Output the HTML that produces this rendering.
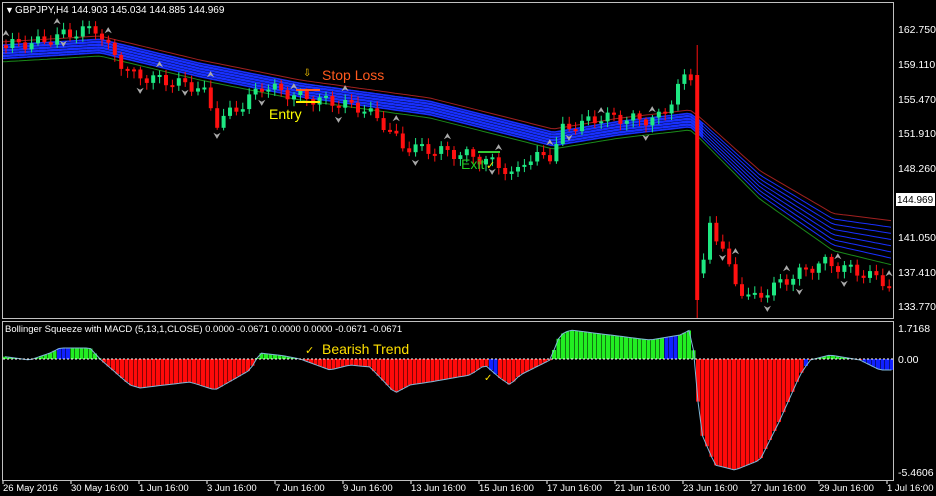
<!DOCTYPE html><html><head><meta charset="utf-8"><style>
html,body{margin:0;padding:0;background:#000;width:936px;height:496px;overflow:hidden}
svg{display:block;font-family:"Liberation Sans",sans-serif}
</style></head><body>
<svg id="s" width="936" height="496" xmlns="http://www.w3.org/2000/svg">
<rect width="936" height="496" fill="#000"/>
<g id="g"></g>
<rect x="2.5" y="2.5" width="891" height="316" fill="none" stroke="#c0c0c0"/>
<rect x="2.5" y="321.5" width="891" height="159" fill="none" stroke="#c0c0c0"/>
<g fill="#fff" font-size="10.5">
<text x="5" y="13" font-size="9">▼</text>
<text x="15" y="13" font-size="10">GBPJPY,H4  144.903 145.034 144.885 144.969</text>
<text x="5" y="332" font-size="9.5">Bollinger Squeeze with MACD (5,13,1,CLOSE) 0.0000 -0.0671 0.0000 0.0000 -0.0671 -0.0671</text>
<text x="898" y="33">162.750</text><text x="898" y="68">159.110</text><text x="898" y="103">155.470</text>
<text x="898" y="137">151.910</text><text x="898" y="172">148.260</text><text x="898" y="241">141.050</text>
<text x="898" y="276">137.410</text><text x="898" y="310">133.770</text>
<text x="898" y="332">1.7168</text><text x="898" y="363">0.00</text><text x="898" y="476">-5.4606</text>
</g>
<rect x="896" y="193" width="39" height="13" fill="#fff"/><text x="897" y="203" font-size="10" fill="#000" font-family="Liberation Sans">144.969</text>
<g fill="#fff" font-size="9.5" id="d"></g>
<g font-size="14">
<text x="322" y="80" fill="#ff5a1e">Stop Loss</text>
<text x="269" y="119" fill="#ffff00">Entry</text>
<text x="461" y="169" fill="#22cc22">Exit</text><text x="486" y="169" fill="#ffe000" font-size="11">✓</text>
<text x="322" y="354" fill="#ffe000">Bearish Trend</text><text x="305" y="354" fill="#ffe000" font-size="11">✓</text>
<text x="484" y="381" fill="#ffe000" font-size="10">✓</text>
<text x="303" y="76" fill="#ffcc00" font-size="10">⇩</text>
</g>
<rect x="296" y="89" width="24" height="2" fill="#ff5a1e"/>
<rect x="296" y="101" width="24" height="2" fill="#ffee00"/>
<rect x="478" y="151" width="22" height="2" fill="#33cc33"/>
</svg>
<script>
var g=document.getElementById('g'),h='';
function interp(p,x){for(var i=1;i<p.length;i++){if(x<=p[i][0]){var a=p[i-1],b=p[i];return a[1]+(b[1]-a[1])*(x-a[0])/(b[0]-a[0]);}}return p[p.length-1][1];}
var mid=[[0,52],[100,46],[200,70],[300,90],[430,108],[553,139],[620,128],[690,120],[700,128],[760,185],[833,232],[893,243]];
var sc=function(x){return x<690?1:1+(x-690)*0.006;};
var pts=function(off,xe){var s='';for(var x=3;x<=(xe||893);x+=4){var y=interp(mid,x)+off*sc(x);s+=x+','+y.toFixed(1)+' ';}return s;};
h+='<polyline points="'+pts(-10)+'" fill="none" stroke="#a02020"/>';
for(var k=-6.3;k<=6.4;k+=1.4)h+='<polyline points="'+pts(k,705)+'" fill="none" stroke="#1830ff"/>';
for(var k=-7;k<=7.1;k+=2.8)h+='<polyline points="'+pts(k)+'" fill="none" stroke="#1830ff"/>';
h+='<polyline points="'+pts(10)+'" fill="none" stroke="#1a8a1a"/>';
var cp=[[5,45],[40,42],[60,35],[95,28],[105,47],[130,75],[160,80],[200,88],[215,122],[240,105],[262,85],[280,92],[300,97],[330,102],[360,108],[380,122],[400,146],[430,150],[470,156],[500,166],[512,178],[522,160],[550,155],[560,130],[600,117],[640,120],[660,117],[680,80],[690,75],[696,300],[708,225],[720,245],[730,280],[750,300],[780,282],[820,262],[850,270],[880,280],[893,290]];
var prev=interp(cp,2);
for(var x=4;x<890;x+=6.4){var c=interp(cp,x)+Math.sin(x*1.7)*6;var o=prev;var up=c<o;var col=up?'#1ee882':'#ff1010';var t=Math.min(o,c),b=Math.max(o,c);if(b-t<2)b=t+2;
var wt=t-2-Math.abs(Math.sin(x))*5,wb=b+2+Math.abs(Math.cos(x))*5;
if(Math.abs(x-696)<3.3){t=75;b=300;wt=45;wb=318;col='#ff1010';}
h+='<line x1="'+(x+2)+'" x2="'+(x+2)+'" y1="'+wt.toFixed(1)+'" y2="'+wb.toFixed(1)+'" stroke="'+col+'"/>';
h+='<rect x="'+x.toFixed(1)+'" y="'+t.toFixed(1)+'" width="4" height="'+(b-t).toFixed(1)+'" fill="'+col+'"/>';
if(Math.sin(x*0.37)>0.93)h+='<text x="'+(x-2)+'" y="'+(wt-3).toFixed(0)+'" fill="#aaa" font-size="9">⮝</text>';
if(Math.cos(x*0.41)>0.95)h+='<text x="'+(x-2)+'" y="'+(wb+9).toFixed(0)+'" fill="#aaa" font-size="9">⮟</text>';
prev=c;}
var hp=[[0,356],[30,360],[50,353],[60,348],[90,348],[100,359],[130,385],[140,388],[190,382],[215,390],[250,370],[260,353],[285,356],[300,359],[330,370],[350,365],[370,367],[395,393],[410,385],[430,382],[470,375],[485,365],[500,378],[510,385],[520,375],[550,360],[560,335],[570,330],[650,340],[680,335],[690,330],[695,359],[700,430],[715,465],[735,470],[760,460],[780,420],[800,375],[810,360],[830,355],[860,360],[880,370],[893,370]];
var line='';
for(var x=3;x<892;x+=4.5){var y=interp(hp,x+2);var col=y<359?'#22ee22':'#ff0a0a';if((x>55&&x<70)||(x>485&&x<498)||(x>660&&x<675)||(x>800&&x<808)||(x>862&&x<892))col='#1020ff';
h+='<rect x="'+x.toFixed(1)+'" y="'+Math.min(y,359).toFixed(1)+'" width="4" height="'+Math.abs(y-359).toFixed(1)+'" fill="'+col+'"/>';line+=(x+2).toFixed(1)+','+y.toFixed(1)+' ';}
h+='<polyline points="'+line+'" fill="none" stroke="#7fb8d8" stroke-width="1"/>';
h+='<line x1="3" x2="893" y1="359" y2="359" stroke="#fff" stroke-dasharray="2,2"/>';
g.innerHTML=h;
var ds=["26 May 2016","30 May 16:00","1 Jun 16:00","3 Jun 16:00","7 Jun 16:00","9 Jun 16:00","13 Jun 16:00","15 Jun 16:00","17 Jun 16:00","21 Jun 16:00","23 Jun 16:00","27 Jun 16:00","29 Jun 16:00","1 Jul 16:00"],dh='';
for(var i=0;i<ds.length;i++){var x=3+i*68;dh+='<text x="'+x+'" y="491">'+ds[i]+'</text><line x1="'+x+'" x2="'+x+'" y1="481" y2="484" stroke="#fff"/>';}
document.getElementById('d').innerHTML=dh;
</script>
</body></html>
